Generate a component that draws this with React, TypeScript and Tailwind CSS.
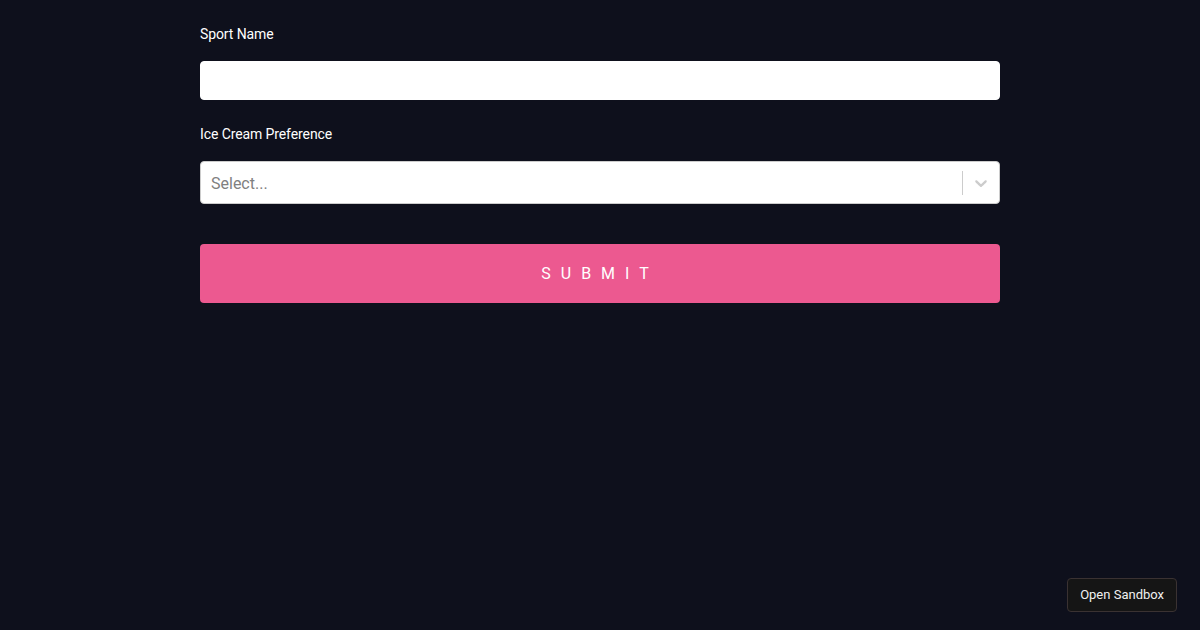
import React from 'react';

const ChevronDown = () => (
  <svg viewBox="0 0 20 20" width="20" height="20" fill="currentColor" aria-hidden="true">
    <path d="M4.516 7.548c0.436-0.446 1.043-0.481 1.576 0l3.908 3.747 3.908-3.747c0.533-0.481 1.141-0.446 1.574 0 0.436 0.445 0.408 1.197 0 1.615-0.406 0.418-4.695 4.502-4.695 4.502-0.217 0.223-0.502 0.335-0.787 0.335s-0.57-0.112-0.789-0.335c0 0-4.287-4.084-4.695-4.502s-0.436-1.17 0-1.615z" />
  </svg>
);

const App = () => {
  return (
    <div className="min-h-screen bg-[#0e101c] font-['Roboto',sans-serif] text-white">
      <form className="mx-auto w-[800px] pt-[24px]" onSubmit={(e) => e.preventDefault()}>
        <label className="block text-sm leading-[20px] tracking-[-0.1px]">Sport Name</label>
        <input
          type="text"
          className="mt-[17px] block h-[39px] w-full rounded-[4px] border border-white bg-white px-[15px] text-sm text-black outline-none"
        />

        <label className="mt-[24px] block text-sm leading-[20px] tracking-[-0.1px]">Ice Cream Preference</label>
        <div className="mt-[17px] flex h-[43px] w-full items-center rounded-[4px] border border-[#cccccc] bg-white">
          <div className="flex-1 pt-[2px] pl-[10px] text-base text-[#808080]">Select...</div>
          <span className="h-[24px] w-px bg-[#cccccc]" />
          <div className="flex w-[36px] items-center justify-center text-[#cccccc]">
            <ChevronDown />
          </div>
        </div>

        <button
          type="submit"
          className="mt-[40px] block h-[59px] w-full rounded-[4px] bg-[#ec5990] text-base uppercase tracking-[10px] text-white"
        >
          Submit
        </button>
      </form>

      <button className="fixed right-[23px] bottom-[18px] h-[34px] rounded-[4px] border border-[#3a3232] bg-[#151515] px-[12px] text-[13px] text-[#f0f0f0]">
        Open Sandbox
      </button>
    </div>
  );
};

export default App;
